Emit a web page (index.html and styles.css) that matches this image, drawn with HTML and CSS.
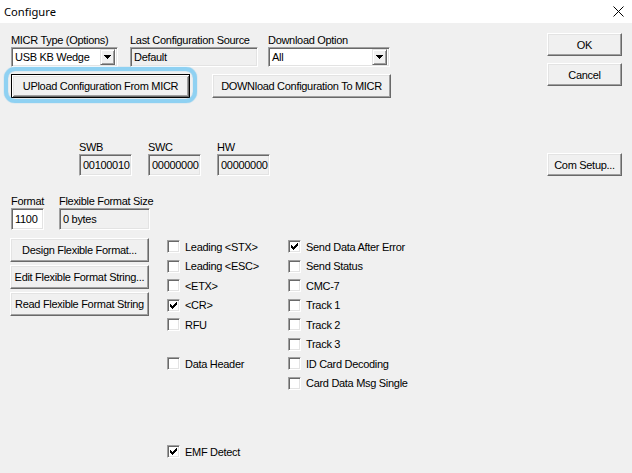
FILE: index.html
```html
<!DOCTYPE html>
<html>
<head>
<meta charset="utf-8">
<link rel="stylesheet" href="styles.css">
</head>
<body>
<div class="titlebar">
  <span class="title">Configure</span>
  <svg class="close" width="11" height="11" viewBox="0 0 11 11"><path d="M0.5 0.5L10.5 10.5M10.5 0.5L0.5 10.5" stroke="#000" stroke-width="1" fill="none"/></svg>
</div>
<div class="body">
  <div class="main">
    <div class="row r1">
      <div class="field w107">
        <div class="lbl">MICR Type (Options)</div>
        <div class="combo sunken"><span class="ctext">USB KB Wedge</span><span class="drop raised"><svg width="7" height="4" viewBox="0 0 7 4"><path d="M0 0h7v1H0zM1 1h5v1H1zM2 2h3v1H2zM3 3h1v1H3z" fill="#000"/></svg></span></div>
      </div>
      <div class="field w128">
        <div class="lbl">Last Configuration Source</div>
        <div class="edit sunken h19">Default</div>
      </div>
      <div class="field w122">
        <div class="lbl">Download Option</div>
        <div class="combo sunken"><span class="ctext">All</span><span class="drop raised"><svg width="7" height="4" viewBox="0 0 7 4"><path d="M0 0h7v1H0zM1 1h5v1H1zM2 2h3v1H2zM3 3h1v1H3z" fill="#000"/></svg></span></div>
      </div>
    </div>
    <div class="row r2">
      <button class="btn default glow w179">UPload Configuration From MICR</button>
      <button class="btn w179">DOWNload Configuration To MICR</button>
    </div>
    <div class="row r3">
      <div class="field w53"><div class="lbl">SWB</div><div class="edit sunken h22">00100010</div></div>
      <div class="field w53"><div class="lbl">SWC</div><div class="edit sunken h22">00000000</div></div>
      <div class="field w53"><div class="lbl">HW</div><div class="edit sunken h22">00000000</div></div>
    </div>
    <div class="row r4">
      <div class="field w33"><div class="lbl">Format</div><div class="edit sunken h22 white">1100</div></div>
      <div class="field w91"><div class="lbl">Flexible Format Size</div><div class="edit sunken h22">0 bytes</div></div>
    </div>
    <div class="row r5">
      <div class="btncol">
        <button class="btn">Design Flexible Format...</button>
        <button class="btn">Edit Flexible Format String...</button>
        <button class="btn">Read Flexible Format String</button>
      </div>
      <div class="checks">
        <div class="ccol c1">
          <div class="cb"><span class="box sunken"></span>Leading &lt;STX&gt;</div>
          <div class="cb"><span class="box sunken"></span>Leading &lt;ESC&gt;</div>
          <div class="cb"><span class="box sunken"></span>&lt;ETX&gt;</div>
          <div class="cb"><span class="box sunken"><svg width="11" height="11" viewBox="0 0 11 11"><path d="M2 4h1v3H2zM3 5h1v3H3zM4 6h1v3H4zM5 5h1v3H5zM6 4h1v3H6zM7 3h1v3H7zM8 2h1v3H8z" fill="#000"/></svg></span>&lt;CR&gt;</div>
          <div class="cb"><span class="box sunken"></span>RFU</div>
          <div class="cb"></div>
          <div class="cb"><span class="box sunken"></span>Data Header</div>
        </div>
        <div class="ccol c2">
          <div class="cb"><span class="box sunken"><svg width="11" height="11" viewBox="0 0 11 11"><path d="M2 4h1v3H2zM3 5h1v3H3zM4 6h1v3H4zM5 5h1v3H5zM6 4h1v3H6zM7 3h1v3H7zM8 2h1v3H8z" fill="#000"/></svg></span>Send Data After Error</div>
          <div class="cb"><span class="box sunken"></span>Send Status</div>
          <div class="cb"><span class="box sunken"></span>CMC-7</div>
          <div class="cb"><span class="box sunken"></span>Track 1</div>
          <div class="cb"><span class="box sunken"></span>Track 2</div>
          <div class="cb"><span class="box sunken"></span>Track 3</div>
          <div class="cb"><span class="box sunken"></span>ID Card Decoding</div>
          <div class="cb"><span class="box sunken"></span>Card Data Msg Single</div>
        </div>
      </div>
    </div>
    <div class="row r6">
      <div class="cb"><span class="box sunken"><svg width="11" height="11" viewBox="0 0 11 11"><path d="M2 4h1v3H2zM3 5h1v3H3zM4 6h1v3H4zM5 5h1v3H5zM6 4h1v3H6zM7 3h1v3H7zM8 2h1v3H8z" fill="#000"/></svg></span>EMF Detect</div>
    </div>
  </div>
  <div class="side">
    <button class="btn s-ok">OK</button>
    <button class="btn s-cancel">Cancel</button>
    <button class="btn s-com">Com Setup...</button>
  </div>
</div>
</body>
</html>
```

FILE: styles.css
```css
* { box-sizing: border-box; }
html, body { margin: 0; padding: 0; }
body {
  width: 632px;
  height: 473px;
  overflow: hidden;
  background: #f0f0f0;
  font-family: "Liberation Sans", Arial, sans-serif;
  font-size: 11px;
  color: #000;
  letter-spacing: -0.3px;
}
.titlebar {
  height: 23px;
  background: #fff;
  display: flex;
  align-items: center;
  justify-content: space-between;
  padding: 0 8px 0 4px;
}
.title {
  font-family: "Noto Sans", "Open Sans", sans-serif;
  font-size: 11.2px;
  letter-spacing: 0;
}
.close { display: block; }
.body { display: flex; padding-top: 11px; }
.main { flex: 1; padding-left: 11px; }
.side {
  width: 75px;
  margin-right: 10px;
  margin-top: -1px;
  display: flex;
  flex-direction: column;
}
.row { display: flex; }
.field { display: flex; flex-direction: column; }
.lbl { height: 13px; line-height: 13px; white-space: nowrap; }
.w107 { width: 107px; }
.w128 { width: 128px; }
.w122 { width: 122px; }
.w179 { width: 179px; }
.w53 { width: 53px; }
.w33 { width: 33px; }
.w91 { width: 91px; }

.sunken {
  border: 1px solid;
  border-color: #a0a0a0 #fff #fff #a0a0a0;
  box-shadow: inset 1px 1px #696969, inset -1px -1px #e3e3e3;
}
.raised {
  border: 1px solid;
  border-color: #e3e3e3 #696969 #696969 #e3e3e3;
  box-shadow: inset 1px 1px #fff, inset -1px -1px #a0a0a0;
}
.edit {
  display: flex;
  align-items: center;
  padding: 0 3px;
  background: #f0f0f0;
  white-space: nowrap;
}
.edit.white { background: #fff; }
.h19 { height: 20px; }
.h22 { height: 22px; }
.combo {
  height: 20px;
  background: #fff;
  display: flex;
  align-items: center;
  justify-content: space-between;
  padding: 2px 2px 2px 3px;
}
.ctext { white-space: nowrap; }
.drop {
  width: 15px;
  height: 16px;
  background: #f0f0f0;
  display: flex;
  align-items: center;
  justify-content: center;
}
.drop svg { display: block; }

.btn {
  font: inherit;
  letter-spacing: inherit;
  color: #000;
  height: 24px;
  padding: 0;
  margin: 0;
  background: #f0f0f0;
  border: 1px solid;
  border-color: #fff #696969 #696969 #fff;
  box-shadow: inset -1px -1px #a0a0a0, inset 1px 1px #e3e3e3;
  white-space: nowrap;
}
.btn.default {
  border-color: #000;
  box-shadow: inset 1px 1px #fff, inset -1px -1px #696969, inset 2px 2px #e3e3e3, inset -2px -2px #a0a0a0;
}
.glow { position: relative; }
.glow::after {
  content: "";
  position: absolute;
  top: -8px;
  left: -8px;
  right: -8px;
  bottom: -6px;
  border: 4px solid #8fd1f2;
  border-radius: 11px;
  box-shadow: 0 0 1px #5fb6e4, inset 0 0 1px #5fb6e4;
}

.r1 { gap: 12px; }
.r1 .field + .field + .field { margin-left: -2px; }
.r2 { margin-top: 7px; gap: 22px; }
.r3 { margin-top: 43px; margin-left: 68px; gap: 16px; }
.r4 { margin-top: 19px; gap: 15px; }
.r5 { margin-top: 8px; }
.btncol {
  width: 139px;
  margin-left: -1px;
  display: flex;
  flex-direction: column;
  gap: 3px;
}
.checks { display: flex; margin-left: 18px; margin-top: -1px; }
.c1 { width: 121px; }
.ccol { display: flex; flex-direction: column; }
.cb {
  display: flex;
  align-items: center;
  height: 19.5px;
  white-space: nowrap;
}
.box {
  width: 13px;
  height: 13px;
  background: #fff;
  margin-right: 5px;
  flex: none;
}
.box svg { display: block; }
.r6 { margin-top: 49px; margin-left: 156px; }

.s-ok { height: 23px; }
.s-cancel { height: 23px; margin-top: 7px; }
.s-com { height: 23px; margin-top: 67px; }
```
